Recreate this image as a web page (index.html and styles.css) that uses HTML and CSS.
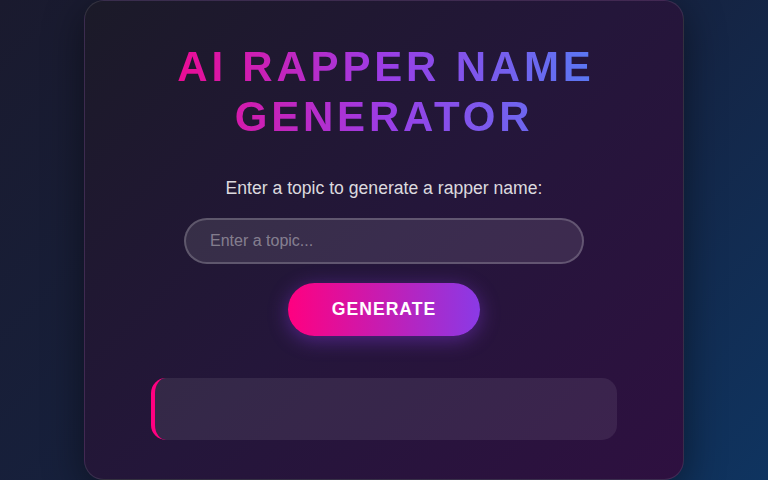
FILE: index.html
```html
<!DOCTYPE html>
<html lang="en">
<head>
<meta charset="utf-8">
<title>AI Rapper Name Generator</title>
<link rel="stylesheet" href="styles.css">
</head>
<body>
  <main class="card">
    <h1 class="title">AI RAPPER NAME GENERATOR</h1>
    <p class="prompt">Enter a topic to generate a rapper name:</p>
    <input class="topic" type="text" placeholder="Enter a topic...">
    <button class="generate" type="button">GENERATE</button>
    <div class="result"></div>
  </main>
</body>
</html>
```
FILE: styles.css
```css
* { box-sizing: border-box; }

html, body { height: 100%; }

body {
  margin: 0;
  min-height: 100vh;
  display: flex;
  justify-content: center;
  align-items: center;
  font-family: "Liberation Sans", Arial, sans-serif;
  background: linear-gradient(135deg, #1a1a2e 0%, #16213e 50%, #0f3460 100%);
  color: #fff;
  overflow: hidden;
}

.card {
  width: 600px;
  height: 480px;
  flex-shrink: 0;
  padding: 41px 40px 40px;
  border: 1px solid rgba(255, 255, 255, 0.1);
  border-radius: 20px;
  background: linear-gradient(135deg, #1b1a28 0%, #24163a 50%, #2e1040 100%);
  box-shadow: 0 10px 40px rgba(0, 0, 0, 0.45);
  display: flex;
  flex-direction: column;
  align-items: center;
  text-align: center;
}

.card > * { flex-shrink: 0; }

.title {
  margin: 0;
  width: 100%;
  font-size: 42px;
  line-height: 1.2;
  font-weight: 700;
  letter-spacing: 3.8px;
  text-indent: 3.8px;
  background: linear-gradient(90deg, #ff0080 0%, #9b3de6 50%, #4a86f6 100%);
  -webkit-background-clip: text;
  background-clip: text;
  color: transparent;
}

.prompt {
  margin: 35px 0 0;
  font-size: 17.6px;
  line-height: 21px;
  color: rgba(255, 255, 255, 0.85);
}

.topic {
  margin-top: 19px;
  width: 400px;
  height: 46px;
  padding: 0 24px;
  border: 2px solid rgba(255, 255, 255, 0.2);
  border-radius: 30px;
  background: rgba(255, 255, 255, 0.1);
  color: #fff;
  font-family: inherit;
  font-size: 16px;
  outline: none;
}

.topic::placeholder { color: rgba(255, 255, 255, 0.4); }

.generate {
  margin-top: 19px;
  width: 192px;
  height: 53px;
  border: none;
  border-radius: 30px;
  background: linear-gradient(90deg, #ff0080 0%, #8a3ae6 100%);
  color: #fff;
  font-family: inherit;
  font-size: 17.6px;
  font-weight: 700;
  letter-spacing: 1px;
  box-shadow: 0 4px 20px rgba(138, 58, 230, 0.45);
  cursor: pointer;
}

.result {
  margin-top: 42px;
  width: 90%;
  height: 62px;
  border-left: 4px solid #ff0080;
  border-radius: 15px;
  background: rgba(255, 255, 255, 0.08);
}
```
